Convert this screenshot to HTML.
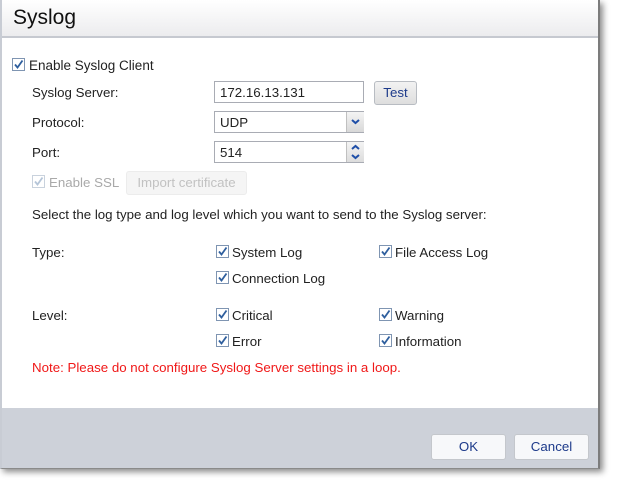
<!DOCTYPE html>
<html><head><style>
body{margin:0;width:620px;height:490px;background:#fff;position:relative;overflow:hidden;font-family:"Liberation Sans",sans-serif;font-size:13.3px;color:#222}
.a{position:absolute;white-space:nowrap}
.dlg{position:absolute;left:0;top:0;width:600px;height:469px;box-sizing:border-box;border-right:2px solid #7c7c7c;border-bottom:1px solid #8a8a8a;box-shadow:3px 3px 6px rgba(0,0,0,.45);background:#fff;border-left:2px solid #c8ccd4}
.title{position:absolute;left:0;top:0;width:596px;height:36px;background:linear-gradient(#fff,#ececee);border-bottom:2px solid #c6c9d0}
.foot{position:absolute;left:0;top:408px;width:596px;height:60px;background:#cdd1d9}
.cb{position:absolute;width:13px;height:13px}
.in{position:absolute;height:20px;border:1px solid #a9acb4;background:#fff;box-sizing:border-box;padding:3px 0 0 5px;font-size:13.3px}
.btn{position:absolute;box-sizing:border-box;border:1px solid #c4c7cc;border-radius:3px;background:linear-gradient(#fafafa,#f0f0f0);text-align:center;color:#1d3a8a}
</style></head><body>
<div class="dlg">
<div class="title"><div class="a" style="left:11px;top:6px;font-size:21px;color:#111">Syslog</div></div>
<div class="foot">
<div class="btn" style="left:429px;top:26px;width:75px;height:26px;line-height:24px;background:#f7f8fa">OK</div>
<div class="btn" style="left:512px;top:26px;width:75px;height:26px;line-height:24px;background:#f7f8fa">Cancel</div>
</div>
</div>
<svg width="0" height="0" style="position:absolute"><defs><symbol id="c" viewBox="0 0 13 13"><rect x="0.5" y="0.5" width="12" height="12" fill="#fff" stroke="#7f95b2"/><path d="M3 6.5L5.5 9.5L10.5 2.5" fill="none" stroke="#2f5f9e" stroke-width="1.8"/></symbol><symbol id="d" viewBox="0 0 13 13"><rect x="0.5" y="0.5" width="12" height="12" fill="#fff" stroke="#c9d2dd"/><path d="M3 6.5L5.5 9.5L10.5 2.5" fill="none" stroke="#b5c5d8" stroke-width="1.8"/></symbol></defs></svg>
<svg class="cb" style="left:12px;top:58px"><use href="#c"/></svg>
<div class="a" style="left:29px;top:58px;font-size:13.5px">Enable Syslog Client</div>
<div class="a" style="left:32px;top:85px">Syslog Server:</div>
<div class="a" style="left:32px;top:115px">Protocol:</div>
<div class="a" style="left:32px;top:145px">Port:</div>
<div class="in" style="left:214px;top:81px;width:150px;height:22px">172.16.13.131</div>
<div class="btn" style="left:374px;top:81px;width:43px;height:24px;line-height:22px;background:linear-gradient(#f2f2f2,#dedede);border-color:#b8bcc2">Test</div>
<div class="in" style="left:214px;top:111px;width:150px;height:22px">UDP</div>
<div class="a" style="left:346px;top:112px;width:17px;height:20px;background:linear-gradient(#f4f4f4,#d8d8d8);border-left:1px solid #c0c0c0"><svg width="17" height="20"><path d="M5 8l3.5 3 3.5-3" fill="none" stroke="#1f4fa8" stroke-width="2"/></svg></div>
<div class="in" style="left:214px;top:141px;width:150px;height:22px">514</div>
<div class="a" style="left:346px;top:142px;width:17px;height:20px;background:linear-gradient(#f4f4f4,#dcdcdc);border-left:1px solid #c0c0c0"><svg width="17" height="20"><path d="M5 7l3.5-3 3.5 3M5 13l3.5 3 3.5-3" fill="none" stroke="#1f4fa8" stroke-width="2"/></svg></div>
<svg class="cb" style="left:32px;top:175px"><use href="#d"/></svg>
<div class="a" style="left:49px;top:175px;color:#a9a9a9">Enable SSL</div>
<div class="btn" style="left:126px;top:171px;width:121px;height:24px;line-height:22px;color:#c2c2c2;border-color:#ececec;background:#f5f5f5">Import certificate</div>
<div class="a" style="left:32px;top:207px">Select the log type and log level which you want to send to the Syslog server:</div>
<div class="a" style="left:32px;top:245px">Type:</div>
<div class="a" style="left:32px;top:308px">Level:</div>
<svg class="cb" style="left:216px;top:245px"><use href="#c"/></svg><div class="a" style="left:232px;top:245px">System Log</div>
<svg class="cb" style="left:379px;top:245px"><use href="#c"/></svg><div class="a" style="left:395px;top:245px">File Access Log</div>
<svg class="cb" style="left:216px;top:271px"><use href="#c"/></svg><div class="a" style="left:232px;top:271px">Connection Log</div>
<svg class="cb" style="left:216px;top:308px"><use href="#c"/></svg><div class="a" style="left:232px;top:308px">Critical</div>
<svg class="cb" style="left:379px;top:308px"><use href="#c"/></svg><div class="a" style="left:395px;top:308px">Warning</div>
<svg class="cb" style="left:216px;top:334px"><use href="#c"/></svg><div class="a" style="left:232px;top:334px">Error</div>
<svg class="cb" style="left:379px;top:334px"><use href="#c"/></svg><div class="a" style="left:395px;top:334px">Information</div>
<div class="a" style="left:32px;top:360px;color:#f01818">Note: Please do not configure Syslog Server settings in a loop.</div>
</body></html>
